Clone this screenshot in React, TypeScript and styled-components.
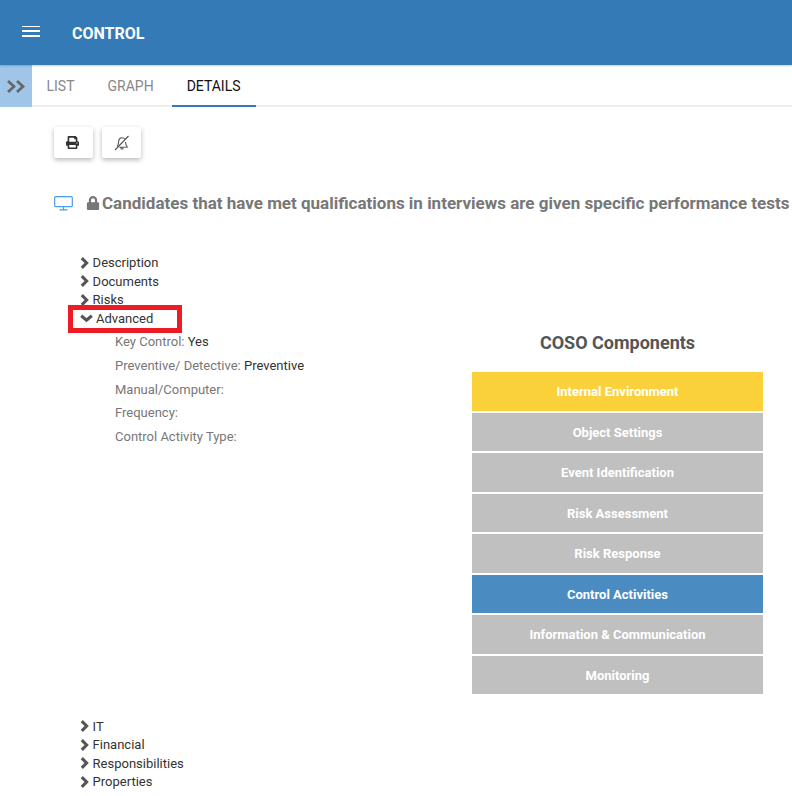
import React from "react";
import styled, { createGlobalStyle } from "styled-components";
import { FaPrint, FaLock } from "react-icons/fa";

const Global = createGlobalStyle`
  html, body { margin: 0; padding: 0; background: #fff; overflow: hidden; }
  body { font-family: Roboto, "Liberation Sans", sans-serif; font-size: 13px; color: #333; }
`;
const Page = styled.div`width: 792px; height: 796px; overflow: hidden; display: flex; flex-direction: column;`;
const Header = styled.header`
  height: 65px; background: #337ab7; display: flex; align-items: center; padding-left: 22px; box-sizing: border-box;
  box-shadow: 0 1px 2px rgba(0,0,0,.2); position: relative; flex: none;
`;
const Burger = styled.div`
  width: 18px; height: 11px; margin-right: 32px; margin-top: -3px; display: flex; flex-direction: column; justify-content: space-between;
  span { display: block; height: 1.5px; background: #fff; }
`;
const Title = styled.div`color: #fff; font-size: 16px; font-weight: 700; margin-top: 1px;`;
const TabBar = styled.nav`height: 42px; display: flex; flex: none; border-bottom: 2px solid #eee; box-sizing: border-box;`;
const Toggle = styled.div`
  width: 32px; height: 42px; background: #9fc5e8; display: flex; align-items: center; justify-content: center;
`;
const Tab = styled.div<{ $active?: boolean }>`
  height: 42px; box-sizing: border-box; padding: 1px ${p => (p.$active ? 15 : 14.5)}px 0 14.5px; margin-right: ${p => (p.$active ? 0 : 4)}px; display: flex; align-items: center;
  font-size: 14px; color: ${p => (p.$active ? "#111" : "#888")};
  border-bottom: 2px solid ${p => (p.$active ? "#337ab7" : "transparent")};
`;
const Tools = styled.div`display: flex; gap: 9px; padding: 20px 0 0 54px; flex: none;`;
const ToolButton = styled.div`
  width: 39px; height: 31px; border-radius: 2px; background: #fff; box-shadow: 0 2px 5px rgba(0,0,0,.28);
  display: flex; align-items: center; justify-content: center; color: #333; font-size: 13px;
`;
const PrintIcon = styled(FaPrint)`margin-right: 3px;`;
const Heading = styled.div`
  display: flex; align-items: center; height: 24px; margin: 33px 0 0 54px; white-space: nowrap; flex: none;
  font-size: 17px; font-weight: 700; color: #777;
`;
const ScreenSvg = styled.svg`margin-right: 13px; flex: none;`;
const LockIcon = styled(FaLock)`color: #777; font-size: 14px; margin-right: 2px; flex: none;`;
const Tree = styled.div<{ $top: number }>`margin: ${p => p.$top}px 0 0 80px; flex: none;`;
const Row = styled.div`height: 18.5px; display: flex; align-items: center; color: #333; position: relative; white-space: nowrap;`;
const ChevronSvg = styled.svg`flex: none; margin-right: 3.6px;`;
const ChevronDownSvg = styled.svg`flex: none; margin-right: 3px;`;
const Highlight = styled.div`
  position: absolute; left: -12px; top: -4.5px; width: 114px; height: 28px; border: 5px solid #ed1c24; box-sizing: border-box;
`;
const Middle = styled.div`display: flex; height: 389.7px; flex: none;`;
const Details = styled.div`width: 472px; flex: none; padding: 2.7px 0 0 115px; box-sizing: border-box;`;
const Field = styled.div`height: 23.7px; line-height: 23.7px; color: #777;  white-space: nowrap; b { font-weight: 400; color: #333; }`;
const Coso = styled.section`width: 291px; flex: none; display: flex; flex-direction: column; gap: 2px;`;
const CosoTitle = styled.h2`
  margin: 0 0 1.8px; height: 41px; padding-top: 4px; box-sizing: border-box; text-align: center; font-size: 18px; line-height: 22px; font-weight: 700; color: #555; flex: none;
`;
const Block = styled.div<{ $bg: string }>`
  height: 38.5px; flex: none; background: ${p => p.$bg}; color: #fff; font-weight: 700; display: flex; align-items: center; justify-content: center; font-size: 13px;
`;

const Right = () => (
  <ChevronSvg width="9" height="12" viewBox="0 0 9 12" aria-hidden>
    <path d="M1.8 1.2 L6.6 6 L1.8 10.8" fill="none" stroke="#555" strokeWidth="3.1" />
  </ChevronSvg>
);
const Down = () => (
  <ChevronDownSvg width="13" height="9" viewBox="0 0 13 9" aria-hidden>
    <path d="M1.2 1.8 L6.5 6.3 L11.8 1.8" fill="none" stroke="#555" strokeWidth="3.1" />
  </ChevronDownSvg>
);
const Doubles = () => (
  <svg width="18" height="13" viewBox="0 0 18 13" aria-hidden>
    <path d="M1 1 L7 6.5 L1 12 M10 1 L16 6.5 L10 12" fill="none" stroke="#666" strokeWidth="2.7" />
  </svg>
);
const BellSlash = () => (
  <svg width="16" height="16" viewBox="0 0 16 16" aria-hidden>
    <path d="M3.2 11.5 C4.6 10 4.4 8 4.7 6 C5 3.8 6.4 2.8 8 2.8 C9.2 2.8 10.2 3.3 10.9 4.3 M11.5 7 C11.6 9 11.8 10.5 13.2 12 L5.5 12.4 M6.8 13.2 C7.2 14.3 8.8 14.3 9.2 13.2" fill="none" stroke="#555" strokeWidth="1.1" />
    <path d="M1 15 L14.5 1" fill="none" stroke="#555" strokeWidth="1.1" />
  </svg>
);
const Screen = () => (
  <ScreenSvg width="19" height="15" viewBox="0 0 19 15" aria-hidden>
    <path d="M1.7 .7 H17.3 Q18.3 .7 18.3 1.7 V9.7 Q18.3 10.7 17.3 10.7 H1.7 Q.7 10.7 .7 9.7 V1.7 Q.7 .7 1.7 .7 Z M9.5 11 V13.5 M5.5 13.8 H13.5" fill="none" stroke="#4a9cf0" strokeWidth="1.2" />
  </ScreenSvg>
);

const blocks: [string, string][] = [
  ["Internal Environment", "#fad13b"],
  ["Object Settings", "#c0c0c0"],
  ["Event Identification", "#c0c0c0"],
  ["Risk Assessment", "#c0c0c0"],
  ["Risk Response", "#c0c0c0"],
  ["Control Activities", "#4a8cc2"],
  ["Information & Communication", "#c0c0c0"],
  ["Monitoring", "#c0c0c0"],
];

export default function App() {
  return (
    <Page>
      <Global />
      <Header>
        <Burger><span /><span /><span /></Burger>
        <Title>CONTROL</Title>
      </Header>
      <TabBar>
        <Toggle><Doubles /></Toggle>
        <Tab>LIST</Tab>
        <Tab>GRAPH</Tab>
        <Tab $active>DETAILS</Tab>
      </TabBar>
      <Tools>
        <ToolButton><PrintIcon /></ToolButton>
        <ToolButton><BellSlash /></ToolButton>
      </Tools>
      <Heading>
        <Screen />
        <LockIcon />
        Candidates that have met qualifications in interviews are given specific performance tests
      </Heading>
      <Tree $top={38.5}>
        <Row><Right />Description</Row>
        <Row><Right />Documents</Row>
        <Row><Right />Risks</Row>
        <Row><Down />Advanced<Highlight /></Row>
      </Tree>
      <Middle>
        <Details>
          <Field>Key Control: <b>Yes</b></Field>
          <Field>Preventive/ Detective: <b>Preventive</b></Field>
          <Field>Manual/Computer:</Field>
          <Field>Frequency:</Field>
          <Field>Control Activity Type:</Field>
        </Details>
        <Coso>
          <CosoTitle>COSO Components</CosoTitle>
          {blocks.map(([t, c]) => <Block key={t} $bg={c}>{t}</Block>)}
        </Coso>
      </Middle>
      <Tree $top={0}>
        <Row><Right />IT</Row>
        <Row><Right />Financial</Row>
        <Row><Right />Responsibilities</Row>
        <Row><Right />Properties</Row>
      </Tree>
    </Page>
  );
}
